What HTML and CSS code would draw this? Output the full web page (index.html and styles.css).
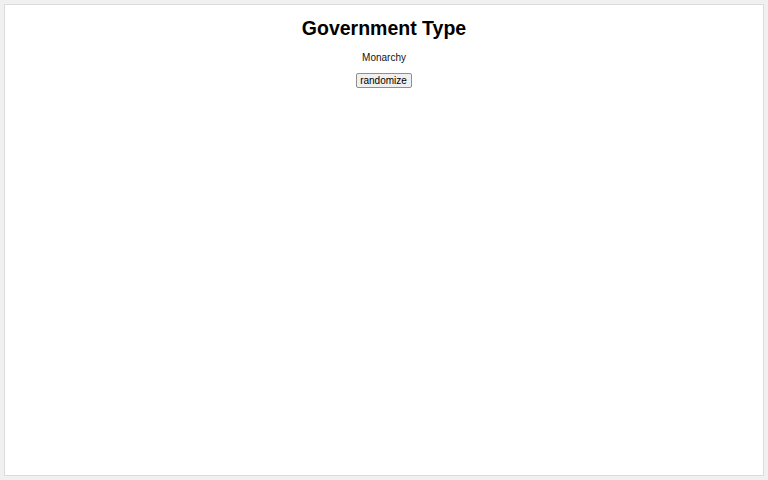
FILE: index.html
```html
<!DOCTYPE html>
<html lang="en">
<head>
    <meta charset="UTF-8">
    <meta name="viewport" content="width=device-width, initial-scale=1.0">
    <title>Government Type</title>
    <link rel="stylesheet" href="styles.css">
</head>
<body>
    <div class="panel">
        <h1>Government Type</h1>
        <p id="gov-type">Monarchy</p>
        <button id="randomize">randomize</button>
    </div>

    <script>
        const types = ["Monarchy", "Democracy", "Republic", "Oligarchy", "Theocracy", "Dictatorship"];
        document.getElementById("randomize").addEventListener("click", function() {
            const pick = types[Math.floor(Math.random() * types.length)];
            document.getElementById("gov-type").textContent = pick;
        });
    </script>
</body>
</html>
```

FILE: styles.css
```css
body {
    font-family: "Liberation Sans", Arial, sans-serif;
    margin: 0;
    padding: 4px;
    background-color: #f0f0f0;
    height: 480px;
    box-sizing: border-box;
}

.panel {
    height: 100%;
    box-sizing: border-box;
    background-color: #fff;
    border: 1px solid #dcdcdc;
    text-align: center;
    padding-top: 12px;
}

h1 {
    margin: 0;
    font-size: 19.5px;
    font-weight: bold;
    color: #000;
}

#gov-type {
    margin: 12px 0 7px;
    font-size: 10px;
    color: #111;
}

#randomize {
    font-family: "Liberation Sans", Arial, sans-serif;
    font-size: 10px;
    padding: 1px 4px 1px 3px;
    background-color: #f0f0f0;
    border: 1px solid #8f8f8f;
    border-radius: 2px;
    color: #000;
}
```
